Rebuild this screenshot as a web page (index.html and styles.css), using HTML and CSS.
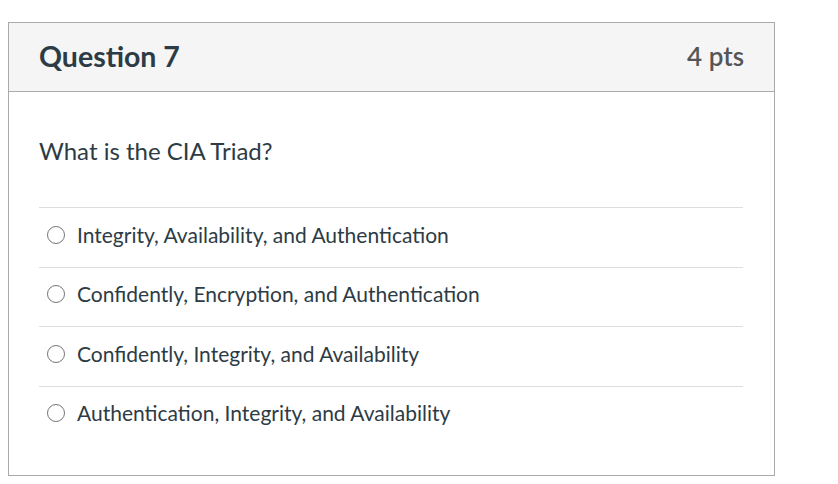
FILE: index.html
```html
<!DOCTYPE html>
<html lang="en">
<head>
<meta charset="utf-8">
<title>Question 7</title>
<link rel="stylesheet" href="styles.css">
</head>
<body>
<div class="card">
  <div class="card-header">
    <h2 class="title">Question 7</h2>
    <span class="pts">4 pts</span>
  </div>
  <div class="card-body">
    <p class="question">What is the CIA Triad?</p>
    <ul class="answers">
      <li class="answer"><span class="radio"></span><span class="label">Integrity, Availability, and Authentication</span></li>
      <li class="answer"><span class="radio"></span><span class="label">Confidently, Encryption, and Authentication</span></li>
      <li class="answer"><span class="radio"></span><span class="label">Confidently, Integrity, and Availability</span></li>
      <li class="answer"><span class="radio"></span><span class="label">Authentication, Integrity, and Availability</span></li>
    </ul>
  </div>
</div>
</body>
</html>
```

FILE: styles.css
```css
html, body {
  background: #ffffff;
}
body {
  margin: 0;
  padding: 22px 0 0 8px;
  font-family: Lato, "Open Sans", sans-serif;
  color: #2d3b45;
}
.card {
  width: 767px;
  box-sizing: border-box;
  border: 1px solid #aaaaaa;
  background: #ffffff;
}
.card-header {
  height: 69px;
  box-sizing: border-box;
  background: #f5f5f5;
  border-bottom: 1px solid #aaaaaa;
  display: flex;
  align-items: center;
  justify-content: space-between;
  padding: 0 30px 2px 30px;
}
.title {
  margin: 0;
  font-size: 28.5px;
  font-weight: 700;
  color: #2d3b45;
  line-height: 1;
}
.pts {
  font-size: 26px;
  font-weight: 600;
  color: #555555;
  line-height: 1;
}
.card-body {
  padding: 44px 31px 30px 30px;
}
.question {
  margin: 0 0 41px 0;
  font-size: 24px;
  line-height: 30px;
  color: #2d3b45;
}
.answers {
  list-style: none;
  margin: 0;
  padding: 0;
}
.answer {
  display: flex;
  align-items: center;
  height: 59.5px;
  box-sizing: border-box;
  border-top: 1px solid #dddddd;
  padding: 0 0 5px 8px;
  gap: 12px;
}
.radio {
  flex: none;
  width: 18px;
  height: 18px;
  box-sizing: border-box;
  border: 1.5px solid #777777;
  border-radius: 50%;
  background: #ffffff;
}
.label {
  font-size: 21px;
  line-height: 24px;
  color: #2d3b45;
}
```
